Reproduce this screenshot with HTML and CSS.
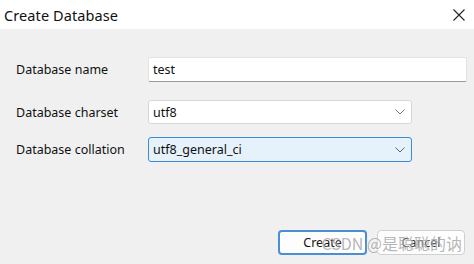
FILE: index.html
```html
<!DOCTYPE html>
<html>
<head>
<meta charset="utf-8">
<link rel="stylesheet" href="styles.css">
</head>
<body>
<div class="dialog">
  <div class="titlebar">
    <span class="title">Create Database</span>
    <svg class="close" width="12" height="12" viewBox="0 0 12 12"><path d="M0.5 0.5 L11.5 11.5 M11.5 0.5 L0.5 11.5" stroke="#222" stroke-width="1.1" fill="none"/></svg>
  </div>
  <div class="panel">
    <div class="form">
      <div class="row row-name">
        <label class="label">Database name</label>
        <div class="field text">test</div>
      </div>
      <div class="row row-charset">
        <label class="label">Database charset</label>
        <div class="field select"><span>utf8</span>
          <svg class="chev" width="10" height="6" viewBox="0 0 10 6"><path d="M0.5 0.5 L5 5 L9.5 0.5" stroke="#777" stroke-width="1" fill="none"/></svg>
        </div>
      </div>
      <div class="row row-coll">
        <label class="label">Database collation</label>
        <div class="field select focus"><span>utf8_general_ci</span>
          <svg class="chev" width="10" height="6" viewBox="0 0 10 6"><path d="M0.5 0.5 L5 5 L9.5 0.5" stroke="#666" stroke-width="1" fill="none"/></svg>
        </div>
      </div>
    </div>
    <div class="buttons">
      <button class="btn primary">Create</button>
      <button class="btn">Cancel</button>
      <span class="watermark">CSDN @是聪聪的讷</span>
    </div>
  </div>
</div>
</body>
</html>
```
FILE: styles.css
```css
html, body {
  margin: 0;
  padding: 0;
}
body {
  width: 474px;
  height: 264px;
  overflow: hidden;
  font-family: "Noto Sans", "Open Sans", sans-serif;
  color: #1a1a1a;
}
.dialog {
  width: 474px;
  height: 264px;
  display: flex;
  flex-direction: column;
}
.titlebar {
  height: 29px;
  background: #ffffff;
  display: flex;
  align-items: center;
  justify-content: space-between;
  padding: 0 9px 0 4px;
}
.title {
  font-size: 14.5px;
  color: #111;
  letter-spacing: 0.1px;
}
.close {
  display: block;
}
.panel {
  flex: 1;
  background: #f0f0f0;
  display: flex;
  flex-direction: column;
  justify-content: space-between;
  padding: 28px 9px 9px 16px;
}
.form {
  display: flex;
  flex-direction: column;
}
.row {
  display: grid;
  grid-template-columns: 132px auto;
  align-items: center;
}
.row-charset { margin-top: 18px; }
.row-coll { margin-top: 13px; }
.label {
  font-size: 12.5px;
  color: #111;
}
.field {
  box-sizing: border-box;
  font-size: 12.5px;
  color: #111;
  padding-left: 4px;
  display: flex;
  align-items: center;
}
.text {
  width: 319px;
  height: 25px;
  background: #fff;
  border: 1px solid #e3e3e3;
  border-bottom: 1px solid #9a9a9a;
  border-radius: 2px;
}
.select {
  width: 264px;
  height: 24px;
  background: #fff;
  border: 1px solid #d6d6d6;
  border-radius: 3px;
  justify-content: space-between;
  padding-right: 6px;
}
.select.focus {
  height: 25px;
  background: #e5f1fb;
  border: 1px solid #3d8bd6;
}
.chev { display: block; }
.buttons {
  position: relative;
  display: flex;
  justify-content: flex-end;
  gap: 10px;
}
.btn {
  box-sizing: border-box;
  width: 88px;
  height: 25px;
  font-family: "Noto Sans", "Open Sans", sans-serif;
  font-size: 12.5px;
  color: #111;
  background: #fdfdfd;
  border: 1px solid #d0d0d0;
  border-radius: 4px;
  padding: 0;
}
.btn.primary {
  width: 89px;
  border: 2px solid #4a8fd4;
  background: #fdfdfd;
}
.watermark {
  position: absolute;
  right: 3px;
  top: 1px;
  font-family: "Noto Sans CJK SC", "Noto Sans", sans-serif;
  font-size: 16px;
  color: rgba(120, 120, 120, 0.55);
  text-shadow: 0 0 2px #fff;
  white-space: nowrap;
  pointer-events: none;
}
```
